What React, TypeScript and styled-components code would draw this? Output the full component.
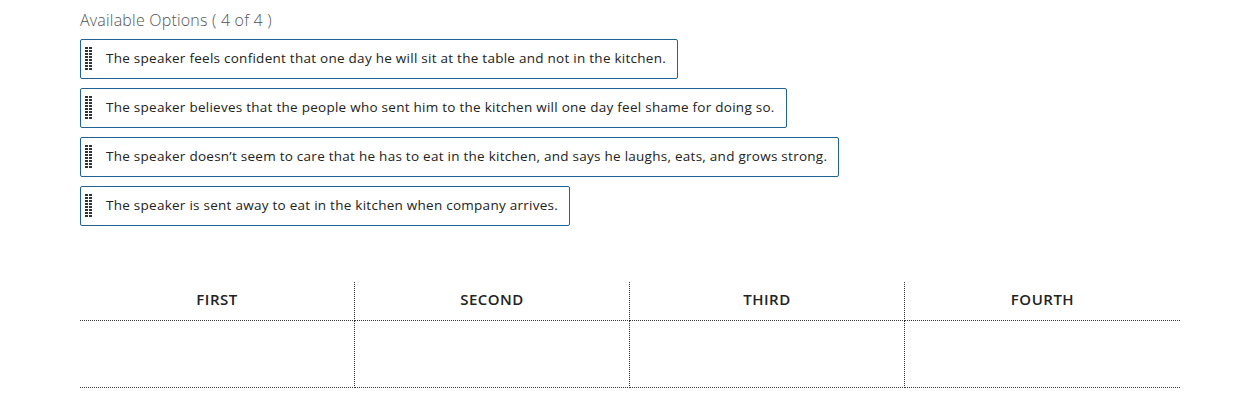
import React from 'react';
import styled, { createGlobalStyle } from 'styled-components';

const GlobalStyle = createGlobalStyle`
  body {
    margin: 0;
    background: #fff;
    font-family: "Open Sans", Lato, sans-serif;
  }
`;

const Page = styled.div`
  padding: 9px 56px 0 80px;
`;

const Title = styled.div`
  font-size: 16px;
  font-weight: 300;
  letter-spacing: 0.2px;
  color: #555;
  line-height: 22px;
  margin-bottom: 8px;
`;

const OptionList = styled.div`
  display: flex;
  flex-direction: column;
  align-items: flex-start;
  gap: 9px;
`;

const OptionCard = styled.div`
  display: flex;
  align-items: center;
  height: 40px;
  box-sizing: border-box;
  border: 1px solid #1f6393;
  border-radius: 2px;
  padding: 0 11px 2px 4px;
  font-size: 13.5px;
  letter-spacing: 0.26px;
  color: #222;
`;

const Grip = styled.div`
  display: grid;
  grid-template-columns: repeat(2, 3px);
  grid-auto-rows: 3px;
  column-gap: 1px;
  width: 7px;
  margin: 2px 14px 0 0;
`;

const Dot = styled.span`
  width: 3px;
  height: 2px;
  background: #333;
`;

const Table = styled.div`
  margin-top: 56px;
  width: 1100px;
  display: grid;
  grid-template-columns: repeat(4, 1fr);
`;

const HeaderCell = styled.div<{ $last?: boolean }>`
  height: 34px;
  padding-bottom: 4px;
  display: flex;
  align-items: center;
  justify-content: center;
  font-weight: 600;
  font-size: 15px;
  letter-spacing: 0.5px;
  color: #222;
  border-bottom: 1px dotted #333;
  border-right: ${(p) => (p.$last ? 'none' : '1px dotted #333')};
`;

const BodyCell = styled.div<{ $last?: boolean }>`
  height: 66px;
  border-bottom: 1px dotted #333;
  border-right: ${(p) => (p.$last ? 'none' : '1px dotted #333')};
`;

const options = [
  'The speaker feels confident that one day he will sit at the table and not in the kitchen.',
  'The speaker believes that the people who sent him to the kitchen will one day feel shame for doing so.',
  'The speaker doesn\u2019t seem to care that he has to eat in the kitchen, and says he laughs, eats, and grows strong.',
  'The speaker is sent away to eat in the kitchen when company arrives.',
];

const columns = ['FIRST', 'SECOND', 'THIRD', 'FOURTH'];

const GripIcon = () => (
  <Grip>
    {Array.from({ length: 16 }).map((_, i) => (
      <Dot key={i} />
    ))}
  </Grip>
);

export default function App() {
  return (
    <>
      <GlobalStyle />
      <Page>
        <Title>Available Options ( 4 of 4 )</Title>
        <OptionList>
          {options.map((text) => (
            <OptionCard key={text}>
              <GripIcon />
              {text}
            </OptionCard>
          ))}
        </OptionList>
        <Table>
          {columns.map((c, i) => (
            <HeaderCell key={c} $last={i === columns.length - 1}>
              {c}
            </HeaderCell>
          ))}
          {columns.map((c, i) => (
            <BodyCell key={c} $last={i === columns.length - 1} />
          ))}
        </Table>
      </Page>
    </>
  );
}
